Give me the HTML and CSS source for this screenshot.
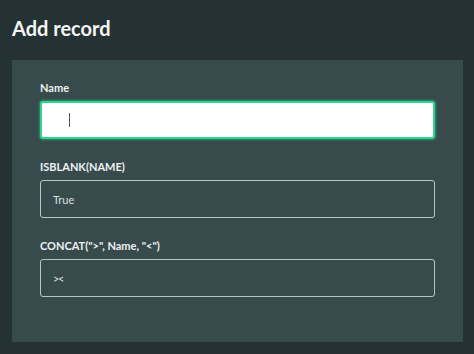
FILE: index.html
```html
<!DOCTYPE html>
<html>
<head>
<meta charset="utf-8">
<link rel="stylesheet" href="styles.css">
</head>
<body>
<div class="page">
  <h1 class="title">Add record</h1>
  <div class="panel">
    <div class="field">
      <label class="label">Name</label>
      <div class="input input-active"><span class="caret"></span></div>
    </div>
    <div class="field">
      <label class="label">ISBLANK(NAME)</label>
      <div class="input">True</div>
    </div>
    <div class="field">
      <label class="label">CONCAT("&gt;", Name, "&lt;")</label>
      <div class="input input-tight">&gt;&lt;</div>
    </div>
  </div>
</div>
</body>
</html>
```
FILE: styles.css
```css
html, body {
  margin: 0;
  padding: 0;
  background: #253234;
  width: 474px;
  height: 354px;
  overflow: hidden;
}
.page {
  padding: 0 11px 0 12px;
  font-family: "Lato", "Open Sans", sans-serif;
}
.title {
  margin: 0;
  padding-top: 16px;
  height: 60px;
  box-sizing: border-box;
  font-size: 20px;
  font-weight: 700;
  color: #f4f6f6;
  line-height: 24px;
}
.panel {
  background: #374a4c;
  height: 282px;
  box-sizing: border-box;
  padding: 21px 28px 0 28px;
  display: flex;
  flex-direction: column;
  gap: 21px;
}
.field {
  display: flex;
  flex-direction: column;
  gap: 6px;
}
.label {
  font-size: 11px;
  font-weight: 700;
  color: #eef2f2;
  line-height: 14px;
}
.input {
  height: 38px;
  box-sizing: border-box;
  border: 1px solid #b9c6c6;
  border-radius: 3px;
  padding: 0 12px;
  display: flex;
  align-items: center;
  font-size: 11px;
  color: #d8e0e0;
}
.input-tight {
  letter-spacing: -1.5px;
}
.input-active {
  background: #ffffff;
  border: 2px solid #2cd58f;
  box-shadow: 0 0 3px #2cd58f;
  padding-left: 27px;
}
.caret {
  display: block;
  width: 1px;
  height: 14px;
  background: #555;
}
```
